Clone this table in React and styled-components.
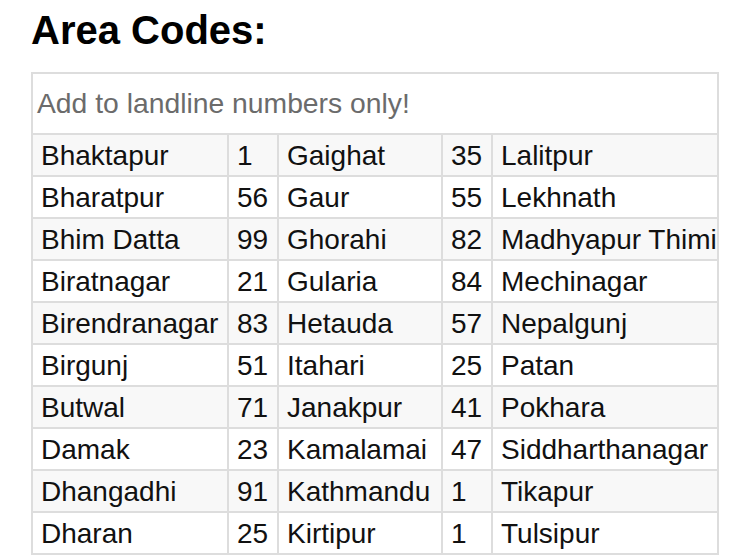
import styled, { createGlobalStyle } from "styled-components";

const GlobalStyle = createGlobalStyle`
  html, body {
    margin: 0;
    background: #fff;
    font-family: "Liberation Sans", Arial, Helvetica, sans-serif;
  }
`;

const Page = styled.div`
  padding: 10px 0 0 31px;
  width: 749px;
  height: 556px;
  box-sizing: border-box;
  overflow: hidden;
`;

const Title = styled.h1`
  margin: 0 0 22px;
  font-size: 40px;
  line-height: 40px;
  font-weight: 700;
  color: #000;
`;

// Contenedor con borde que recorta la última columna
const Frame = styled.div`
  width: 688px;
  border: 2px solid #ddd;
  box-sizing: border-box;
  overflow: hidden;
`;

const Caption = styled.div`
  height: 59px;
  display: flex;
  align-items: center;
  padding-left: 4px;
  font-size: 28.3px;
  color: #6b6b6b;
`;

const Row = styled.div`
  display: grid;
  grid-template-columns: 196px 50px 164px 50px 320px;
  height: 42px;
  background: ${(p) => (p.$striped ? "#f8f8f8" : "#fff")};
`;

const Cell = styled.div`
  box-sizing: border-box;
  border-top: 2px solid #ddd;
  border-right: ${(p) => (p.$last ? "none" : "2px solid #ddd")};
  padding: 2px 0 0 8px;
  display: flex;
  align-items: center;
  font-size: 28px;
  color: #111;
  white-space: nowrap;
`;

const rows = [
  ["Bhaktapur", "1", "Gaighat", "35", "Lalitpur"],
  ["Bharatpur", "56", "Gaur", "55", "Lekhnath"],
  ["Bhim Datta", "99", "Ghorahi", "82", "Madhyapur Thimi"],
  ["Biratnagar", "21", "Gularia", "84", "Mechinagar"],
  ["Birendranagar", "83", "Hetauda", "57", "Nepalgunj"],
  ["Birgunj", "51", "Itahari", "25", "Patan"],
  ["Butwal", "71", "Janakpur", "41", "Pokhara"],
  ["Damak", "23", "Kamalamai", "47", "Siddharthanagar"],
  ["Dhangadhi", "91", "Kathmandu", "1", "Tikapur"],
  ["Dharan", "25", "Kirtipur", "1", "Tulsipur"],
];

export default function App() {
  return (
    <Page>
      <GlobalStyle />
      <Title>Area Codes:</Title>
      <Frame>
        <Caption>Add to landline numbers only!</Caption>
        {rows.map((row, i) => (
          <Row key={row[0]} $striped={i % 2 === 0}>
            {row.map((cell, j) => (
              <Cell key={j} $last={j === row.length - 1}>
                {cell}
              </Cell>
            ))}
          </Row>
        ))}
      </Frame>
    </Page>
  );
}
